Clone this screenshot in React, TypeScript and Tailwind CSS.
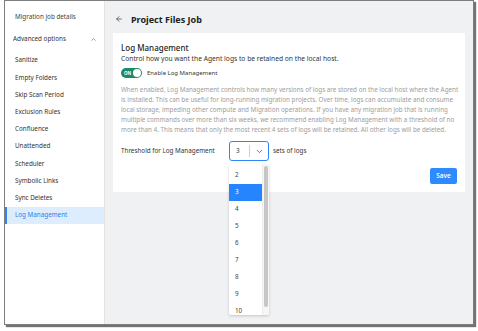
import { ChevronDown, ChevronUp, ArrowLeft } from "lucide-react";

const navItems = [
  "Sanitize",
  "Empty Folders",
  "Skip Scan Period",
  "Exclusion Rules",
  "Confluence",
  "Unattended",
  "Scheduler",
  "Symbolic Links",
  "Sync Deletes",
  "Log Management",
];

const lines = [
  "When enabled, Log Management controls how many versions of logs are stored on the local host where the Agent",
  "is installed. This can be useful for long-running migration projects. Over time, logs can accumulate and consume",
  "local storage, impeding other compute and Migration operations. If you have any migration job that is running",
  "multiple commands over more than six weeks, we recommend enabling Log Management with a threshold of no",
  "more than 4. This means that only the most recent 4 sets of logs will be retained. All other logs will be deleted.",
];

const options = ["2", "3", "4", "5", "6", "7", "8", "9", "10"];

function Sidebar() {
  return (
    <aside className="w-[100px] shrink-0 bg-white border-r border-[#e3e3e3] pt-[8px]">
      <div className="h-[17px] flex items-center pl-[10px] text-[#444]">Migration job details</div>
      <div className="mt-[5px] h-[17px] flex items-center justify-between pl-[8px] pr-[7px] text-[#333]">
        <span>Advanced options</span>
        <ChevronUp size={7} strokeWidth={2} className="text-[#555]" />
      </div>
      <div className="mt-[4px]">
        {navItems.map((item) => {
          const active = item === "Log Management";
          return (
            <div
              key={item}
              className={
                active
                  ? "h-[17.2px] flex items-center pl-[8px] border-l-2 border-[#2f86f6] bg-[#deedfd] text-[#2a7ee8]"
                  : "h-[17.2px] flex items-center pl-[10px] text-[#333]"
              }
            >
              {item}
            </div>
          );
        })}
      </div>
    </aside>
  );
}

function Toggle() {
  return (
    <div className="w-[21px] h-[10px] rounded-full bg-[#1d8a6c] flex items-center justify-between pl-[3px] pr-[1px]">
      <span className="text-[4.5px] font-bold text-white leading-none">ON</span>
      <span className="w-[8px] h-[8px] rounded-full bg-white" />
    </div>
  );
}

function ThresholdSelect() {
  return (
    <div className="relative">
      <div className="w-[40px] h-[20px] rounded-[3px] border border-[#2f86f6] bg-white flex items-center">
        <span className="flex-1 pl-[6px] text-[#333]">3</span>
        <span className="h-[12px] w-px bg-[#cfcfcf]" />
        <span className="w-[18px] flex items-center justify-center">
          <ChevronDown size={9} strokeWidth={2} className="text-[#444]" />
        </span>
      </div>
      <div className="absolute left-0 top-[23px] w-[40px] h-[151px] bg-white rounded-[2px] shadow-[0_1px_3px_rgba(0,0,0,0.18)] flex overflow-hidden">
        <div className="flex-1 pt-[3px]">
          {options.map((o) => (
            <div
              key={o}
              className={
                o === "3"
                  ? "h-[17px] flex items-center pl-[6px] bg-[#2684ff] text-white"
                  : "h-[17px] flex items-center pl-[6px] text-[#444]"
              }
            >
              {o}
            </div>
          ))}
        </div>
        <div className="w-[7px] bg-[#f6f6f6] border-l border-[#ececec] pt-[2px] flex justify-center">
          <div className="w-[4px] h-[141px] rounded-full bg-[#c6c6c6]" />
        </div>
      </div>
    </div>
  );
}

export default function App() {
  return (
    <div className="w-[478px] h-[331px] bg-white font-['Noto_Sans',sans-serif] text-[6.3px] leading-none">
      <div className="ml-[4px] w-[470px] h-[325px] border border-[#7d7d7d] shadow-[2px_2px_1px_rgba(0,0,0,0.55)] flex overflow-hidden">
        <Sidebar />
        <main className="flex-1 bg-[#f0f1f3]">
          <div className="h-[32px] flex items-center pl-[10px] pt-[4px] gap-[8px]">
            <ArrowLeft size={8} strokeWidth={2} className="text-[#333]" />
            <h1 className="text-[9px] font-bold text-[#222]">Project Files Job</h1>
          </div>
          <section className="ml-[8px] w-[352px] h-[159px] bg-white px-[8px] pt-[10px]">
            <h2 className="text-[8px] font-medium text-[#222] h-[10px] flex items-center">Log Management</h2>
            <p className="mt-[2px] h-[9px] flex items-center text-[6.7px] text-[#333]">
              Control how you want the Agent logs to be retained on the local host.
            </p>
            <div className="mt-[4px] h-[10px] flex items-center gap-[5px]">
              <Toggle />
              <span className="text-[#333] text-[6px]">Enable Log Management</span>
            </div>
            <div className="mt-[7px] text-[#9d9d9d] text-[6.3px]">
              {lines.map((l) => (
                <div key={l} className="h-[10px] flex items-center whitespace-nowrap">
                  {l}
                </div>
              ))}
            </div>
            <div className="mt-[6px] flex items-center">
              <span className="w-[108px] text-[#333]">Threshold for Log Management</span>
              <ThresholdSelect />
              <span className="ml-[4px] text-[#333]">sets of logs</span>
            </div>
            <div className="flex justify-end mt-[7px]">
              <button className="w-[27px] h-[16px] rounded-[2px] bg-[#2d8bff] text-white text-[6.3px] font-semibold">
                Save
              </button>
            </div>
          </section>
        </main>
      </div>
    </div>
  );
}
